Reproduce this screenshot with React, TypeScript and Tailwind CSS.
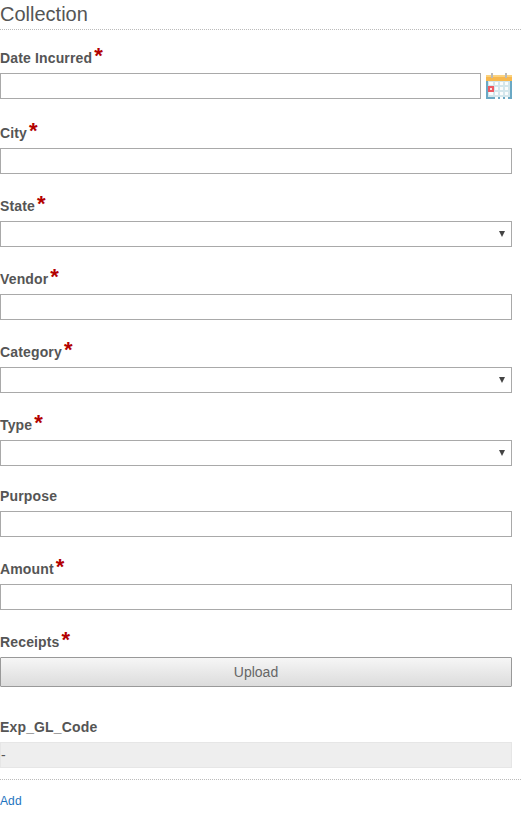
import React from "react";

function Label({ text, required }: { text: string; required?: boolean }) {
  if (!required) {
    return (
      <label className="block h-[20px] text-[14px] font-bold leading-[10px] tracking-[0.15px] text-[#555]">
        {text}
      </label>
    );
  }
  return (
    <label className="block h-[22px] whitespace-nowrap text-[14px] font-bold leading-[10px] tracking-[0.15px] text-[#555]">
      {text}
      <span className="ml-[2px] text-[22px] font-bold leading-[10px] text-[#b30000]">
        *
      </span>
    </label>
  );
}

function TextInput() {
  return (
    <input
      type="text"
      className="block h-[26px] w-full border border-[#a9a9a9] bg-white outline-none"
    />
  );
}

function SelectInput() {
  return (
    <div className="relative h-[26px] w-full">
      <select className="block h-[26px] w-full appearance-none rounded-none border border-[#a9a9a9] bg-white outline-none" />
      <svg
        viewBox="0 0 6 6"
        className="pointer-events-none absolute right-[7px] top-[10px] h-[6px] w-[6px]"
      >
        <path d="M0 0H6L3 6Z" fill="#444" />
      </svg>
    </div>
  );
}

function CalendarIcon() {
  return (
    <svg viewBox="0 0 26 26" className="ml-[5px] h-[26px] w-[26px] shrink-0">
      <rect x="0" y="2" width="26" height="24" fill="#6aa8c4" />
      <rect x="2" y="8" width="22" height="16" fill="#d3e6ec" />
      <rect x="0" y="2" width="26" height="6" fill="#f7b84e" />
      <rect x="0" y="2" width="26" height="2" fill="#fbd27e" />
      <rect x="5" y="0" width="2" height="5" fill="#b9b9b9" />
      <rect x="19" y="0" width="2" height="5" fill="#b9b9b9" />
      {[3, 8, 13, 18].map((y) =>
        [9, 14, 19].map((x) => (
          <rect key={`${x}-${y}`} x={x} y={y + 6} width="3" height="3" fill="#fafcfd" />
        ))
      )}
      <rect x="3" y="9" width="4" height="3" fill="#fafcfd" />
      <rect x="3" y="19" width="4" height="3" fill="#fafcfd" />
      <rect x="2" y="13" width="6" height="6" fill="#ee5a63" />
      <rect x="4" y="15" width="2" height="2" fill="#fbe3e0" />
    </svg>
  );
}

export default function App() {
  return (
    <div className="min-h-[817px] w-[521px] bg-white font-['Liberation_Sans',Arial,sans-serif]">
      <div className="h-[30px] border-b border-dotted border-[#bbb] text-[20px] leading-[28px] text-[#555]">
        Collection
      </div>

      <div className="pr-[9px] pt-[21px]">
        <div className="mb-[27px]">
          <Label text="Date Incurred" required />
          <div className="flex">
            <TextInput />
            <CalendarIcon />
          </div>
        </div>
        <div className="mb-[25px]">
          <Label text="City" required />
          <TextInput />
        </div>
        <div className="mb-[25px]">
          <Label text="State" required />
          <SelectInput />
        </div>
        <div className="mb-[25px]">
          <Label text="Vendor" required />
          <TextInput />
        </div>
        <div className="mb-[25px]">
          <Label text="Category" required />
          <SelectInput />
        </div>
        <div className="mb-[25px]">
          <Label text="Type" required />
          <SelectInput />
        </div>
        <div className="mb-[25px]">
          <Label text="Purpose" />
          <TextInput />
        </div>
        <div className="mb-[25px]">
          <Label text="Amount" required />
          <TextInput />
        </div>
        <div className="mb-[35px]">
          <Label text="Receipts" required />
          <button className="block h-[30px] w-full rounded-[1px] border border-[#999] bg-gradient-to-b from-[#f6f6f6] to-[#dcdcdc] text-[14px] text-[#666]">
            Upload
          </button>
        </div>
        <div>
          <Label text="Exp_GL_Code" />
          <div className="h-[26px] border border-[#e6e6e6] bg-[#eee] text-[14px] leading-[24px] text-[#555]">
            -
          </div>
        </div>
      </div>

      <div className="mt-[11px] border-t border-dotted border-[#bbb] pt-[14px] text-[12px] leading-[14px] tracking-[0.1px] text-[#1e73be]">
        Add
      </div>
    </div>
  );
}
